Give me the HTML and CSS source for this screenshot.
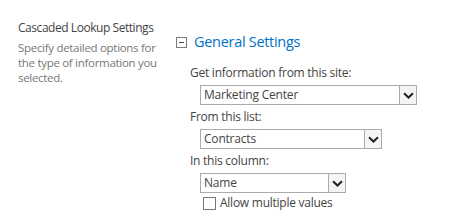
FILE: index.html
```html
<!DOCTYPE html>
<html>
<head>
<meta charset="utf-8">
<link rel="stylesheet" href="styles.css">
</head>
<body>
<div class="page">
  <div class="side">
    <div class="side-title">Cascaded Lookup Settings</div>
    <div class="side-desc">Specify detailed options for the type of information you selected.</div>
  </div>
  <div class="main">
    <div class="section-head">
      <span class="toggle"><span class="minus"></span></span>
      <span class="section-title">General Settings</span>
    </div>
    <div class="fields">
      <div class="label">Get information from this site:</div>
      <div class="select w1"><span class="value">Marketing Center</span><span class="btn"><svg width="11" height="7" viewBox="0 0 11 7"><path d="M1 1.2 L5.5 5.5 L10 1.2" fill="none" stroke="#222" stroke-width="2"/></svg></span></div>
      <div class="label">From this list:</div>
      <div class="select w2"><span class="value">Contracts</span><span class="btn"><svg width="11" height="7" viewBox="0 0 11 7"><path d="M1 1.2 L5.5 5.5 L10 1.2" fill="none" stroke="#222" stroke-width="2"/></svg></span></div>
      <div class="label">In this column:</div>
      <div class="select w3 last"><span class="value">Name</span><span class="btn"><svg width="11" height="7" viewBox="0 0 11 7"><path d="M1 1.2 L5.5 5.5 L10 1.2" fill="none" stroke="#222" stroke-width="2"/></svg></span></div>
      <div class="check"><span class="box"></span><span class="check-label">Allow multiple values</span></div>
    </div>
  </div>
</div>
</body>
</html>
```

FILE: styles.css
```css
html, body {
  margin: 0;
  padding: 0;
  background: #ffffff;
}
body {
  font-family: "Open Sans", "Noto Sans", "Liberation Sans", sans-serif;
  color: #444444;
  width: 474px;
  height: 220px;
  overflow: hidden;
}
.page {
  display: flex;
  padding: 20px 0 0 18px;
}
.side {
  width: 158px;
  flex: none;
}
.side-title {
  font-size: 12px;
  line-height: 16px;
  color: #444444;
  letter-spacing: -0.45px;
}
.side-desc {
  margin-top: 4px;
  font-size: 11.5px;
  line-height: 15px;
  color: #777777;
  width: 152px;
  letter-spacing: -0.3px;
}
.main {
  flex: 1;
  padding-top: 12px;
}
.section-head {
  display: flex;
  align-items: center;
  gap: 7px;
}
.toggle {
  width: 9px;
  height: 9px;
  border: 1px solid #7a7a7a;
  display: flex;
  align-items: center;
  justify-content: center;
}
.minus {
  width: 5px;
  height: 1px;
  background: #444444;
}
.section-title {
  font-size: 14.5px;
  line-height: 20px;
  color: #0072c6;
  letter-spacing: -0.3px;
}
.fields {
  padding-left: 14px;
  padding-top: 13px;
  display: flex;
  flex-direction: column;
  align-items: flex-start;
}
.label {
  font-size: 12px;
  line-height: 16px;
  color: #444444;
  letter-spacing: -0.25px;
}
.select {
  margin-left: 10px;
  margin-top: 4px;
  margin-bottom: 4px;
  height: 18px;
  border: 1px solid #ababab;
  display: flex;
  align-items: stretch;
  box-sizing: content-box;
}
.select.last {
  margin-bottom: 2px;
}
.select .value {
  flex: 1;
  font-size: 12px;
  line-height: 18px;
  padding-left: 3px;
  color: #444444;
  letter-spacing: -0.2px;
}
.select .btn {
  width: 16px;
  border-left: 1px solid #ababab;
  background: #f4f4f4;
  display: flex;
  align-items: center;
  justify-content: center;
}
.w1 { width: 215px; }
.w2 { width: 180px; }
.w3 { width: 144px; }
.check {
  margin-left: 13px;
  display: flex;
  align-items: center;
  gap: 4px;
}
.box {
  width: 11px;
  height: 11px;
  border: 1px solid #777777;
  background: #ffffff;
}
.check-label {
  font-size: 12px;
  line-height: 16px;
  color: #444444;
  letter-spacing: -0.25px;
}
```
